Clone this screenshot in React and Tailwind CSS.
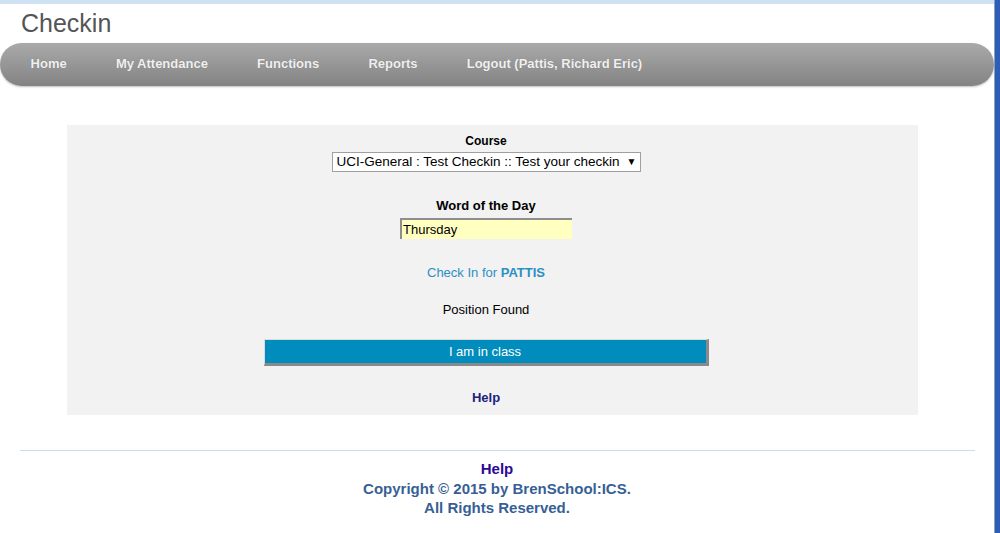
export default function App() {
  const nav = ['Home', 'My Attendance', 'Functions', 'Reports', 'Logout (Pattis, Richard Eric)'];

  return (
    <div className="flex h-[533px] w-[1000px] overflow-hidden bg-white font-['Liberation_Sans',Arial,sans-serif]">
      <div className="flex w-[994px] flex-col">
        <div className="h-[4px] bg-[#cfe2f3]" />
        <h1 className="ml-[21px] mt-[2px] h-[37px] text-[25px] leading-[34px] text-[#555555]">Checkin</h1>

        <nav className="flex h-[43px] items-center rounded-[22px] bg-gradient-to-b from-[#aaaaaa] to-[#838383] pb-[1px] pl-[6px] shadow-[0_1px_2px_rgba(0,0,0,0.25)]">
          {nav.map((item) => (
            <a key={item} className="px-[24.6px] text-[13px] font-bold text-[#f0f0f0] [text-shadow:0_0_1px_rgba(0,0,0,0.2)]">
              {item}
            </a>
          ))}
        </nav>

        <main className="mx-[67px] mt-[39px] flex h-[290px] w-[851px] flex-col items-center bg-[#f2f2f2] pr-[13px] pt-[9px] text-[13px] text-black">
          <label className="text-[12px] font-bold leading-[15px]">Course</label>
          <div className="mt-[3px] flex h-[20px] w-[309px] items-center justify-between border border-[#a0a0a0] bg-white pl-[4px] pr-[3px] text-[13.5px] leading-none">
            <span>UCI-General : Test Checkin :: Test your checkin</span>
            <span className="text-[10px]">▼</span>
          </div>

          <label className="mt-[26px] text-[13px] font-bold leading-[16px]">Word of the Day</label>
          <div className="mt-[4px] flex h-[21px] w-[172px] items-center border-l-2 border-t-2 border-[#8e8e8e] bg-[#ffffc0] pl-[1px] text-[13px] leading-none">
            Thursday
          </div>

          <p className="mt-[26px] leading-[16px] text-[#2b8fc4]">
            Check In for <span className="font-bold">PATTIS</span>
          </p>
          <p className="mt-[21px] leading-[16px]">Position Found</p>

          <button className="mt-[21px] h-[27px] w-[445px] border-b-[3px] border-l border-r-[3px] border-t border-b-[#8a8a8a] border-l-[#dcdcdc] border-r-[#8a8a8a] border-t-[#dcdcdc] bg-[#008cbc] text-[13px] text-white">
            I am in class
          </button>

          <a className="mt-[24px] font-bold leading-[16px] text-[#1a237e]">Help</a>
        </main>

        <hr className="mx-[20px] mt-[35px] w-[955px] border-t border-[#c8dff0]" />

        <footer className="mt-[8px] flex flex-col items-center text-[15px] font-bold leading-[19.5px]">
          <a className="text-[#2c0896]">Help</a>
          <p className="text-[#375f96]">Copyright © 2015 by BrenSchool:ICS.</p>
          <p className="text-[#375f96]">All Rights Reserved.</p>
        </footer>
      </div>
      <div className="w-[1px] bg-[#8aa0c0]" />
      <div className="w-[5px] bg-[#2f5cb4]" />
    </div>
  );
}
